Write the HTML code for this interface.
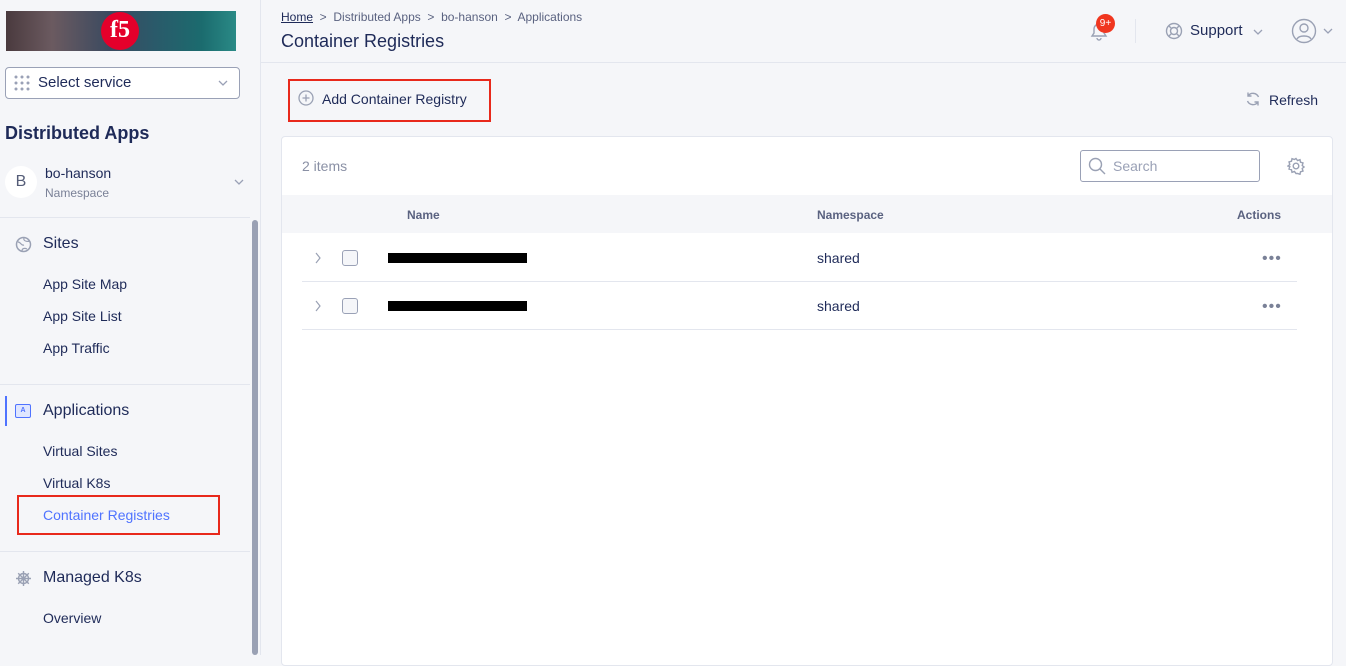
<!DOCTYPE html>
<html><head><meta charset="utf-8"><style>
*{box-sizing:border-box;margin:0;padding:0}
body{width:1346px;height:655px;overflow:hidden;background:#f5f6f9;font-family:"Liberation Sans",sans-serif;color:#1e2a58;position:relative}
.abs{position:absolute}
.sb{left:0;top:0;width:261px;height:655px;background:#f5f6f9;border-right:1px solid #e3e6ee}
.t{position:absolute;white-space:nowrap}
.hr{position:absolute;height:1px;background:#e3e6ee}
</style></head><body>
<div class="abs sb"></div>
<div class="abs" style="left:6px;top:11px;width:230px;height:40px;background:linear-gradient(90deg,#4a3a3e 0%,#6b5a60 20%,#3b4a60 45%,#2a5a6a 65%,#1b6b6e 85%,#2a8a86 100%)"></div>
<div class="abs" style="left:101px;top:12px;width:38px;height:38px;border-radius:50%;background:#e4002b;color:#fff;font:bold 24px 'Liberation Serif',serif;text-align:center;line-height:36px">f5</div>
<div class="abs" style="left:5px;top:67px;width:235px;height:32px;border:1px solid #9aa1b6;border-radius:4px;background:#fff"></div>
<svg class="abs" style="left:14px;top:75px" width="16" height="16"><g fill="#9aa1b6"><circle cx="2" cy="2" r="1.5"/><circle cx="8" cy="2" r="1.5"/><circle cx="14" cy="2" r="1.5"/><circle cx="2" cy="8" r="1.5"/><circle cx="8" cy="8" r="1.5"/><circle cx="14" cy="8" r="1.5"/><circle cx="2" cy="14" r="1.5"/><circle cx="8" cy="14" r="1.5"/><circle cx="14" cy="14" r="1.5"/></g></svg>
<div class="t" style="left:38px;top:74px;font-size:15px">Select service</div>
<svg class="abs" style="left:218px;top:79px" width="10" height="8"><path d="M1 2l4 4 4-4" fill="none" stroke="#9aa1b6" stroke-width="1.3"/></svg>
<div class="t" style="left:5px;top:123px;font-size:18px;font-weight:bold">Distributed Apps</div>
<div class="abs" style="left:5px;top:166px;width:32px;height:32px;border-radius:50%;background:#fff;color:#555d78;font-size:16px;text-align:center;line-height:32px">B</div>
<div class="t" style="left:45px;top:165px;font-size:14px">bo-hanson</div>
<div class="t" style="left:45px;top:186px;font-size:12px;color:#7a8197">Namespace</div>
<svg class="abs" style="left:234px;top:178px" width="10" height="8"><path d="M1 2l4 4 4-4" fill="none" stroke="#9aa1b6" stroke-width="1.3"/></svg>
<div class="hr" style="left:0;top:217px;width:250px"></div>
<div class="abs" style="left:252px;top:220px;width:6px;height:435px;background:#9aa1b4;border-radius:3px"></div>
<svg class="abs" style="left:15px;top:236px" width="17" height="17"><circle cx="8.5" cy="8.5" r="7" fill="none" stroke="#9aa1b4" stroke-width="1.5"/><path d="M3 6c3 0 3 4 6 3M9 2c-1 3 3 4 6 3M7 15c0-3 3-3 5-2" fill="none" stroke="#9aa1b4" stroke-width="1.2"/></svg>
<div class="t" style="left:43px;top:235px;font-size:16px">Sites</div>
<div class="t" style="left:43px;top:276px;font-size:14px">App Site Map</div>
<div class="t" style="left:43px;top:308px;font-size:14px">App Site List</div>
<div class="t" style="left:43px;top:340px;font-size:14px">App Traffic</div>
<div class="hr" style="left:0;top:384px;width:250px"></div>
<div class="abs" style="left:5px;top:396px;width:2px;height:30px;background:#4f73ff"></div>
<div class="abs" style="left:15px;top:404px;width:16px;height:14px;border:1.5px solid #4f73ff;border-radius:2px;background:#dfe6ff;font-size:7px;color:#4f73ff;text-align:center;line-height:11px;font-weight:bold">A</div>
<div class="t" style="left:43px;top:402px;font-size:16px">Applications</div>
<div class="t" style="left:43px;top:443px;font-size:14px">Virtual Sites</div>
<div class="t" style="left:43px;top:475px;font-size:14px">Virtual K8s</div>
<div class="abs" style="left:17px;top:495px;width:203px;height:40px;border:2px solid #e8291c"></div>
<div class="t" style="left:43px;top:507px;font-size:14px;color:#4f73ff">Container Registries</div>
<div class="hr" style="left:0;top:551px;width:250px"></div>
<svg class="abs" style="left:15px;top:570px" width="17" height="17"><g fill="none" stroke="#9aa1b4" stroke-width="1.4"><circle cx="8.5" cy="8.5" r="5"/><path d="M8.5 1v15M1 8.5h15M3.2 3.2l10.6 10.6M13.8 3.2L3.2 13.8"/></g></svg>
<div class="t" style="left:43px;top:569px;font-size:16px">Managed K8s</div>
<div class="t" style="left:43px;top:610px;font-size:14px">Overview</div>

<div class="t" style="left:281px;top:10px;font-size:12px;color:#5a6280"><span style="text-decoration:underline;color:#1e2a58">Home</span> &nbsp;&gt;&nbsp; Distributed Apps &nbsp;&gt;&nbsp; bo-hanson &nbsp;&gt;&nbsp; Applications</div>
<div class="t" style="left:281px;top:31px;font-size:18px">Container Registries</div>
<div class="hr" style="left:261px;top:62px;width:1085px"></div>
<svg class="abs" style="left:1088px;top:20px" width="22" height="22"><path d="M4 16h14l-2-3V9a5 5 0 0 0-10 0v4zM9 18a2 2 0 0 0 4 0" fill="none" stroke="#9aa1b4" stroke-width="1.4"/></svg>
<div class="abs" style="left:1096px;top:14px;width:19px;height:19px;border-radius:50%;background:#f0361f;color:#fff;font-size:10px;text-align:center;line-height:19px">9+</div>
<div class="abs" style="left:1135px;top:19px;width:1px;height:24px;background:#e3e6ee"></div>
<svg class="abs" style="left:1165px;top:22px" width="18" height="18"><g fill="none" stroke="#9aa1b4" stroke-width="1.4"><circle cx="9" cy="9" r="7.5"/><circle cx="9" cy="9" r="3.5"/><path d="M4 4l2.5 2.5M14 4l-2.5 2.5M4 14l2.5-2.5M14 14l-2.5-2.5"/></g></svg>
<div class="t" style="left:1190px;top:22px;font-size:15px">Support</div>
<svg class="abs" style="left:1253px;top:28px" width="10" height="8"><path d="M1 2l4 4 4-4" fill="none" stroke="#9aa1b6" stroke-width="1.3"/></svg>
<svg class="abs" style="left:1291px;top:18px" width="26" height="26"><g fill="none" stroke="#9aa1b4" stroke-width="1.4"><circle cx="13" cy="13" r="11.5"/><circle cx="13" cy="10" r="4"/><path d="M6 21c2-4 12-4 14 0"/></g></svg>
<svg class="abs" style="left:1323px;top:27px" width="10" height="8"><path d="M1 2l4 4 4-4" fill="none" stroke="#9aa1b6" stroke-width="1.3"/></svg>

<div class="abs" style="left:288px;top:79px;width:203px;height:43px;border:2px solid #e8291c"></div>
<svg class="abs" style="left:298px;top:90px" width="16" height="16"><g fill="none" stroke="#9aa1b4" stroke-width="1.3"><circle cx="8" cy="8" r="7"/><path d="M8 4.5v7M4.5 8h7"/></g></svg>
<div class="t" style="left:322px;top:91px;font-size:14px">Add Container Registry</div>
<svg class="abs" style="left:1245px;top:91px" width="16" height="16"><g fill="none" stroke="#9aa1b4" stroke-width="1.4"><path d="M13.5 6A6 6 0 0 0 3 5M2.5 10A6 6 0 0 0 13 11M3 1.5V5h3.5M13 14.5V11H9.5"/></g></svg>
<div class="t" style="left:1269px;top:92px;font-size:14px">Refresh</div>

<div class="abs" style="left:281px;top:136px;width:1052px;height:530px;background:#fff;border:1px solid #e3e6ee;border-radius:4px"></div>
<div class="t" style="left:302px;top:158px;font-size:14px;color:#8a90a5">2 items</div>
<div class="abs" style="left:1080px;top:150px;width:180px;height:32px;border:1px solid #9aa1b6;border-radius:3px"></div>
<svg class="abs" style="left:1088px;top:157px" width="18" height="18"><g fill="none" stroke="#9aa1b4" stroke-width="1.4"><circle cx="7.5" cy="7.5" r="6"/><path d="M12 12l5 5"/></g></svg>
<div class="t" style="left:1113px;top:158px;font-size:14px;color:#9aa1b6">Search</div>
<svg class="abs" style="left:1287px;top:157px" width="18" height="18"><g fill="none" stroke="#9aa1b4" stroke-width="1.4"><circle cx="9" cy="9" r="2.8"/><path d="M9 1.5l1.5 2 2.5-.8.5 2.5 2.5.8-.8 2.5 1.8 1.5-1.8 1.5.8 2.5-2.5.8-.5 2.5-2.5-.8L9 16.5l-1.5-2-2.5.8-.5-2.5-2.5-.8.8-2.5L1 9l1.8-1.5L2 5l2.5-.8L5 1.7l2.5.8z"/></g></svg>
<div class="abs" style="left:282px;top:195px;width:1050px;height:38px;background:#f5f6f9"></div>
<div class="t" style="left:407px;top:208px;font-size:12px;font-weight:bold;color:#5a6280">Name</div>
<div class="t" style="left:817px;top:208px;font-size:12px;font-weight:bold;color:#5a6280">Namespace</div>
<div class="t" style="left:1237px;top:208px;font-size:12px;font-weight:bold;color:#5a6280">Actions</div>

<svg class="abs" style="left:314px;top:252px" width="8" height="12"><path d="M2 1l4 5-4 5" fill="none" stroke="#9aa1b4" stroke-width="1.2"/></svg>
<div class="abs" style="left:342px;top:250px;width:16px;height:16px;border:1.5px solid #9aa1b6;border-radius:3px;background:#f5f6f9"></div>
<div class="abs" style="left:388px;top:253px;width:139px;height:10px;background:#000"></div>
<div class="t" style="left:817px;top:250px;font-size:14px">shared</div>
<div class="t" style="left:1262px;top:250px;font-size:16px;color:#7a8197;letter-spacing:1px">•••</div>
<div class="hr" style="left:302px;top:281px;width:995px"></div>

<svg class="abs" style="left:314px;top:300px" width="8" height="12"><path d="M2 1l4 5-4 5" fill="none" stroke="#9aa1b4" stroke-width="1.2"/></svg>
<div class="abs" style="left:342px;top:298px;width:16px;height:16px;border:1.5px solid #9aa1b6;border-radius:3px;background:#f5f6f9"></div>
<div class="abs" style="left:388px;top:301px;width:139px;height:10px;background:#000"></div>
<div class="t" style="left:817px;top:298px;font-size:14px">shared</div>
<div class="t" style="left:1262px;top:298px;font-size:16px;color:#7a8197;letter-spacing:1px">•••</div>
<div class="hr" style="left:302px;top:329px;width:995px"></div>
</body></html>
